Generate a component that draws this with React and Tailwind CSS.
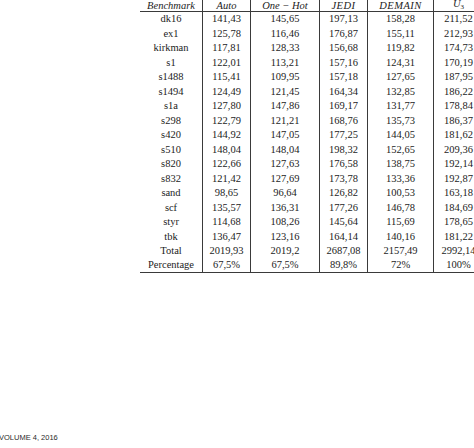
const rows = [
  ["dk16", "141,43", "145,65", "197,13", "158,28", "211,52"],
  ["ex1", "125,78", "116,46", "176,87", "155,11", "212,93"],
  ["kirkman", "117,81", "128,33", "156,68", "119,82", "174,73"],
  ["s1", "122,01", "113,21", "157,16", "124,31", "170,19"],
  ["s1488", "115,41", "109,95", "157,18", "127,65", "187,95"],
  ["s1494", "124,49", "121,45", "164,34", "132,85", "186,22"],
  ["s1a", "127,80", "147,86", "169,17", "131,77", "178,84"],
  ["s298", "122,79", "121,21", "168,76", "135,73", "186,37"],
  ["s420", "144,92", "147,05", "177,25", "144,05", "181,62"],
  ["s510", "148,04", "148,04", "198,32", "152,65", "209,36"],
  ["s820", "122,66", "127,63", "176,58", "138,75", "192,14"],
  ["s832", "121,42", "127,69", "173,78", "133,36", "192,87"],
  ["sand", "98,65", "96,64", "126,82", "100,53", "163,18"],
  ["scf", "135,57", "136,31", "177,26", "146,78", "184,69"],
  ["styr", "114,68", "108,26", "145,64", "115,69", "178,65"],
  ["tbk", "136,47", "123,16", "164,14", "140,16", "181,22"],
  ["Total", "2019,93", "2019,2", "2687,08", "2157,49", "2992,14"],
  ["Percentage", "67,5%", "67,5%", "89,8%", "72%", "100%"],
];

const widths = ["w-[62px]", "w-[48px]", "w-[69px]", "w-[48px]", "w-[66px]", "w-[50px]"];

function Cell({ i, children }) {
  return (
    <div
      className={`${widths[i]} shrink-0 flex items-center justify-center ${
        i > 0 ? "border-l border-[#3a3a3a]" : ""
      }`}
    >
      {children}
    </div>
  );
}

export default function App() {
  return (
    <div className="w-[474px] h-[448px] overflow-hidden bg-white flex flex-col text-[#1c1c1c]">
      <div className="ml-[140px] w-[343px] shrink-0 font-['Liberation_Serif',serif] text-[10.5px]">
        {/* header */}
        <div className="flex h-[12px] leading-[11px] border-b border-[#3a3a3a] italic">
          <Cell i={0}>Benchmark</Cell>
          <Cell i={1}>Auto</Cell>
          <Cell i={2}>One − Hot</Cell>
          <Cell i={3}><span className="tracking-[0.5px]">JEDI</span></Cell>
          <Cell i={4}><span className="tracking-[0.5px]">DEMAIN</span></Cell>
          <Cell i={5}>
            <span>
              U<span className="text-[7px] not-italic align-[-2px]">3</span>
            </span>
          </Cell>
        </div>
        {rows.map((r, ri) => (
          <div
            key={r[0]}
            className={`flex h-[14.5px] ${ri === rows.length - 1 ? "border-b border-[#3a3a3a]" : ""}`}
          >
            {r.map((v, i) => (
              <Cell key={i} i={i}>{v}</Cell>
            ))}
          </div>
        ))}
      </div>
      <div className="mt-auto pb-[6px] font-['Liberation_Sans',sans-serif] text-[7.5px] leading-[8px] text-[#2a2a2a] ml-[-1px]">
        VOLUME 4, 2016
      </div>
    </div>
  );
}
